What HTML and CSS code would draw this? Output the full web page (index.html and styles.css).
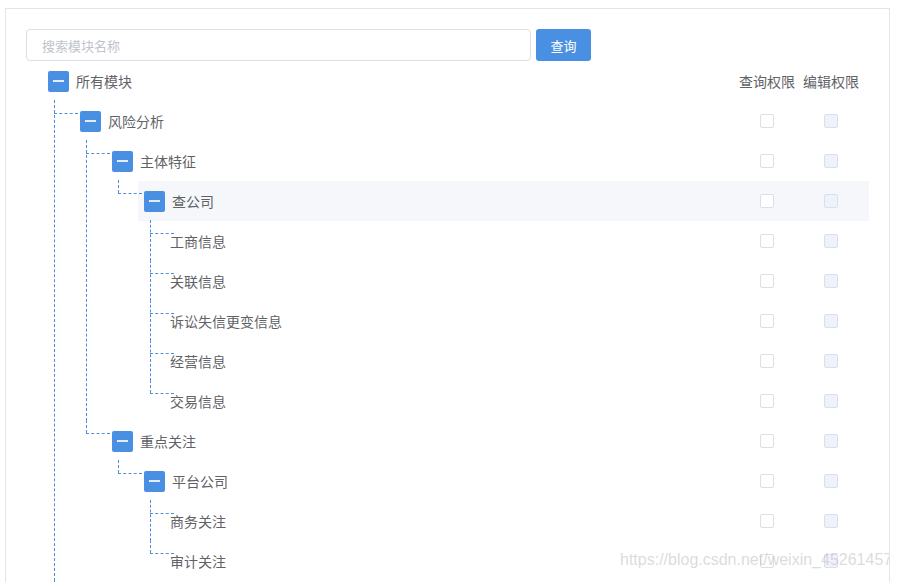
FILE: index.html
```html
<html lang="zh">

<head>
    <meta charset="UTF-8">
    <meta name="viewport" content="width=device-width, initial-scale=1.0">
    <title>模块权限</title>
    <link rel="stylesheet" href="styles.css">
</head>

<body>
    <div class="panel">
        <div class="search">
            <input class="search-input" type="text" placeholder="搜索模块名称">
            <button class="search-btn">查询</button>
        </div>
        <ul class="tree">
            <li class="node">
                <div class="row">
                    <span class="toggle"></span>
                    <span class="label">所有模块</span>
                    <div class="perms">
                        <span class="perm-col">查询权限</span>
                        <span class="perm-col">编辑权限</span>
                    </div>
                </div>
                <ul class="children">
                    <li class="node">
                        <div class="row">
                            <span class="toggle"></span>
                            <span class="label">风险分析</span>
                            <div class="perms">
                                <span class="perm-col"><span class="check"></span></span>
                                <span class="perm-col"><span class="check disabled"></span></span>
                            </div>
                        </div>
                        <ul class="children">
                            <li class="node">
                                <div class="row">
                                    <span class="toggle"></span>
                                    <span class="label">主体特征</span>
                                    <div class="perms">
                                        <span class="perm-col"><span class="check"></span></span>
                                        <span class="perm-col"><span class="check disabled"></span></span>
                                    </div>
                                </div>
                                <ul class="children">
                                    <li class="node">
                                        <div class="row current">
                                            <span class="toggle"></span>
                                            <span class="label">查公司</span>
                                            <div class="perms">
                                                <span class="perm-col"><span class="check"></span></span>
                                                <span class="perm-col"><span class="check disabled"></span></span>
                                            </div>
                                        </div>
                                        <ul class="children">
                                            <li class="node">
                                                <div class="row leaf">
                                                    <span class="label">工商信息</span>
                                                    <div class="perms">
                                                        <span class="perm-col"><span class="check"></span></span>
                                                        <span class="perm-col"><span class="check disabled"></span></span>
                                                    </div>
                                                </div>
                                            </li>
                                            <li class="node">
                                                <div class="row leaf">
                                                    <span class="label">关联信息</span>
                                                    <div class="perms">
                                                        <span class="perm-col"><span class="check"></span></span>
                                                        <span class="perm-col"><span class="check disabled"></span></span>
                                                    </div>
                                                </div>
                                            </li>
                                            <li class="node">
                                                <div class="row leaf">
                                                    <span class="label">诉讼失信更变信息</span>
                                                    <div class="perms">
                                                        <span class="perm-col"><span class="check"></span></span>
                                                        <span class="perm-col"><span class="check disabled"></span></span>
                                                    </div>
                                                </div>
                                            </li>
                                            <li class="node">
                                                <div class="row leaf">
                                                    <span class="label">经营信息</span>
                                                    <div class="perms">
                                                        <span class="perm-col"><span class="check"></span></span>
                                                        <span class="perm-col"><span class="check disabled"></span></span>
                                                    </div>
                                                </div>
                                            </li>
                                            <li class="node">
                                                <div class="row leaf">
                                                    <span class="label">交易信息</span>
                                                    <div class="perms">
                                                        <span class="perm-col"><span class="check"></span></span>
                                                        <span class="perm-col"><span class="check disabled"></span></span>
                                                    </div>
                                                </div>
                                            </li>
                                        </ul>
                                    </li>
                                </ul>
                            </li>
                            <li class="node">
                                <div class="row">
                                    <span class="toggle"></span>
                                    <span class="label">重点关注</span>
                                    <div class="perms">
                                        <span class="perm-col"><span class="check"></span></span>
                                        <span class="perm-col"><span class="check disabled"></span></span>
                                    </div>
                                </div>
                                <ul class="children">
                                    <li class="node">
                                        <div class="row">
                                            <span class="toggle"></span>
                                            <span class="label">平台公司</span>
                                            <div class="perms">
                                                <span class="perm-col"><span class="check"></span></span>
                                                <span class="perm-col"><span class="check disabled"></span></span>
                                            </div>
                                        </div>
                                        <ul class="children">
                                            <li class="node">
                                                <div class="row leaf">
                                                    <span class="label">商务关注</span>
                                                    <div class="perms">
                                                        <span class="perm-col"><span class="check"></span></span>
                                                        <span class="perm-col"><span class="check disabled"></span></span>
                                                    </div>
                                                </div>
                                            </li>
                                            <li class="node">
                                                <div class="row leaf">
                                                    <span class="label">审计关注</span>
                                                    <div class="perms">
                                                        <span class="perm-col"><span class="check"></span></span>
                                                        <span class="perm-col"><span class="check disabled"></span></span>
                                                    </div>
                                                </div>
                                            </li>
                                        </ul>
                                    </li>
                                </ul>
                            </li>
                        </ul>
                    </li>
                    <!-- next module starts below the fold -->
                    <li class="node">
                        <div class="row"></div>
                    </li>
                </ul>
            </li>
        </ul>
        <div class="watermark">https://blog.csdn.net/weixin_45261457</div>
    </div>
</body>

</html>
```

FILE: styles.css
```css
html,
body {
    margin: 0;
    height: 100%;
    overflow: hidden;
}

body {
    font-family: "Noto Sans CJK SC", "Liberation Sans", sans-serif;
    color: #606266;
    font-size: 14px;
    background-color: #fff;
}

.panel {
    position: relative;
    box-sizing: border-box;
    margin: 8px 0 0 5px;
    width: 885px;
    height: calc(100% - 8px);
    padding: 20px 20px 0 20px;
    border: 1px solid #e4e4e4;
    border-bottom: none;
    overflow: hidden;
}

.search {
    display: flex;
    gap: 5px;
}

.search-input {
    box-sizing: border-box;
    width: 505px;
    height: 32px;
    padding: 0 15px;
    border: 1px solid #dcdfe6;
    border-radius: 4px;
    font-family: inherit;
    font-size: 13px;
    color: #606266;
    outline: none;
}

.search-input::placeholder {
    color: #c0c4cc;
}

.search-btn {
    width: 55px;
    height: 32px;
    border: none;
    border-radius: 3px;
    background-color: #4a90e2;
    color: #fff;
    font-family: inherit;
    font-size: 13px;
    line-height: 1;
    padding: 0;
}

.tree,
.children {
    list-style: none;
    margin: 0;
    padding: 0;
}

.tree {
    margin-left: 16px;
}

.children {
    padding-left: 32px;
}

.node {
    position: relative;
}

.children>.node::before {
    content: "";
    position: absolute;
    left: -20px;
    top: -1px;
    bottom: 0;
    border-left: 1px dashed #4a8ede;
}

.children>.node:last-child::before {
    bottom: auto;
    height: 13px;
}

.children>.node::after {
    content: "";
    position: absolute;
    left: -20px;
    top: 12px;
    width: 24px;
    border-top: 1px dashed #4a8ede;
}

.row {
    display: flex;
    align-items: center;
    height: 40px;
    padding-left: 6px;
    line-height: 1;
}

.row.leaf {
    padding-left: 0;
}

.row.current {
    background-color: #f5f7fa;
}

.toggle {
    position: relative;
    width: 21px;
    height: 21px;
    margin-right: 7px;
    border-radius: 2px;
    background-color: #4a90e2;
    flex-shrink: 0;
}

.toggle::before {
    content: "";
    position: absolute;
    left: 5px;
    top: 9px;
    width: 11px;
    height: 2px;
    background-color: rgba(255, 255, 255, 0.85);
}

.label {
    white-space: nowrap;
}

.perms {
    display: flex;
    gap: 8px;
    margin-left: auto;
    padding-right: 10px;
}

.perm-col {
    display: flex;
    justify-content: center;
    width: 56px;
    white-space: nowrap;
}

.check {
    box-sizing: border-box;
    width: 14px;
    height: 14px;
    border: 1px solid #dcdfe6;
    border-radius: 2px;
    background-color: #fff;
}

.check.disabled {
    background-color: #edf2fc;
}

.watermark {
    position: absolute;
    left: 614px;
    top: 542px;
    font-family: "Liberation Sans", sans-serif;
    font-size: 16px;
    color: rgba(190, 190, 190, 0.55);
    white-space: nowrap;
}
```
